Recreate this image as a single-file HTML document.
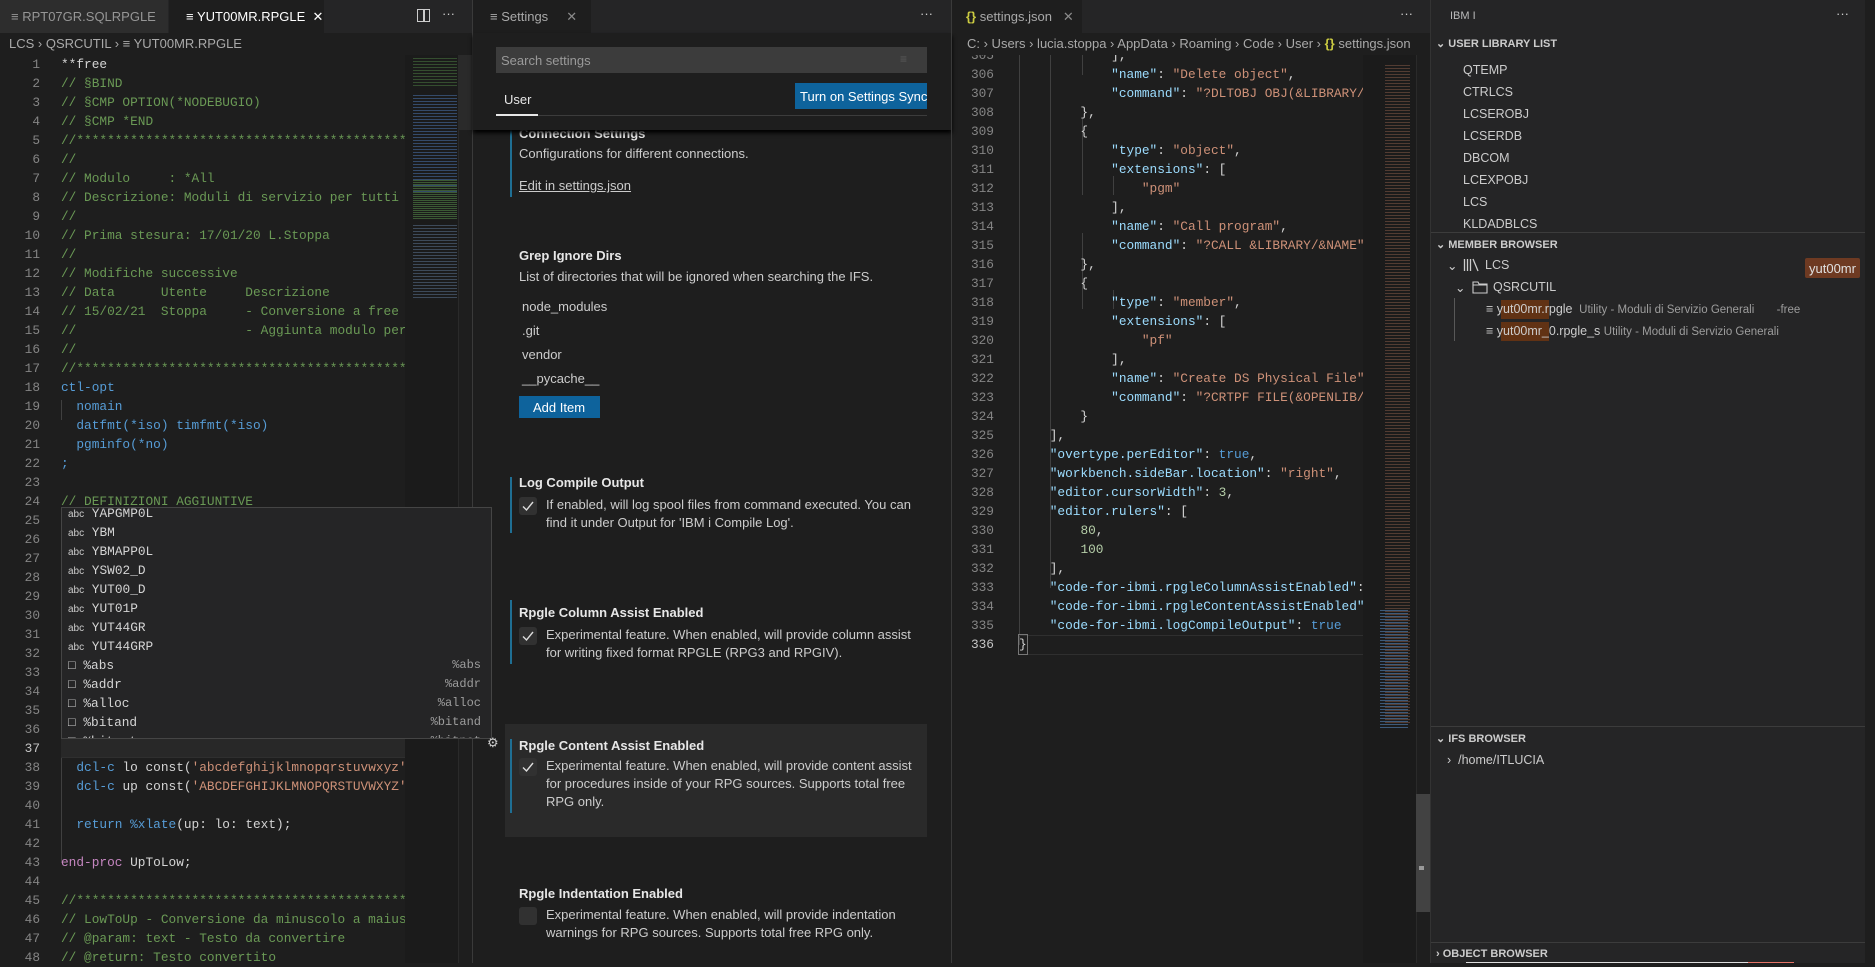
<!DOCTYPE html>
<html><head><meta charset="utf-8"><style>
*{margin:0;padding:0;box-sizing:border-box}
body{width:1875px;height:963px;background:#1e1e1e;position:relative;overflow:hidden;font-family:"Liberation Sans",sans-serif;color:#ccc}
.a{position:absolute}
.m{font-family:"Liberation Mono",monospace;font-size:12.8px;line-height:19px}
.ln{position:absolute;width:40px;text-align:right;color:#858585}
.cd{position:absolute;overflow:hidden;white-space:pre}
.r{white-space:pre;height:19px}
.c{color:#6a9955}.k{color:#569cd6}.s{color:#ce9178}.p{color:#c586c0}.w{color:#d4d4d4}.j{color:#9cdcfe}.n{color:#b5cea8}
.t{font-size:13px;white-space:nowrap}
.b{font-weight:bold;color:#e7e7e7}
.chk{position:absolute;width:18px;height:18px;background:#313131;border-radius:3px}
.chk svg{position:absolute;left:2px;top:2px}
.sh{font-size:11px;font-weight:bold;color:#ccc}
.abc{font-family:'Liberation Sans';font-size:10px;color:#ccc}
</style></head><body>

<!-- ===== Editor 1 ===== -->
<div class="a" style="left:0;top:0;width:472px;height:33px;background:#252526"></div>
<div class="a" style="left:0;top:0;width:168px;height:33px;background:#2d2d2d"></div>
<div class="a t" style="left:11px;top:9px;color:#969696">≡ RPT07GR.SQLRPGLE</div>
<div class="a" style="left:169px;top:0;width:155px;height:33px;background:#1e1e1e"></div>
<div class="a t" style="left:186px;top:9px;color:#fff">≡ YUT00MR.RPGLE &nbsp;✕</div>
<div class="a" style="left:417px;top:9px;width:13px;height:13px;border:1.5px solid #ccc"></div>
<div class="a" style="left:423px;top:9px;width:1.5px;height:13px;background:#ccc"></div>
<div class="a t" style="left:442px;top:6px;color:#ccc">···</div>
<div class="a t" style="left:9px;top:36px;color:#a9a9a9">LCS › QSRCUTIL › ≡ YUT00MR.RPGLE</div>

<div class="a" style="left:61px;top:738px;width:344px;height:20px;background:#282828;border-top:1px solid #2f2f2f;border-bottom:1px solid #2f2f2f"></div>
<div class="a" style="left:61px;top:400px;width:1px;height:20px;background:#404040"></div>
<div class="a" style="left:61px;top:758px;width:1px;height:105px;background:#404040"></div>

<div class="a m" style="left:0;top:55px;width:405px">
<div class="ln" style="top:0">1</div><div class="cd" style="left:61px;top:0;width:344px"><span class="w">**free</span></div>
<div class="ln" style="top:19px">2</div><div class="cd c" style="left:61px;top:19px;width:344px">// §BIND</div>
<div class="ln" style="top:38px">3</div><div class="cd c" style="left:61px;top:38px;width:344px">// §CMP OPTION(*NODEBUGIO)</div>
<div class="ln" style="top:57px">4</div><div class="cd c" style="left:61px;top:57px;width:344px">// §CMP *END</div>
<div class="ln" style="top:76px">5</div><div class="cd c" style="left:61px;top:76px;width:344px">//**************************************************</div>
<div class="ln" style="top:95px">6</div><div class="cd c" style="left:61px;top:95px;width:344px">//</div>
<div class="ln" style="top:114px">7</div><div class="cd c" style="left:61px;top:114px;width:344px">// Modulo     : *All</div>
<div class="ln" style="top:133px">8</div><div class="cd c" style="left:61px;top:133px;width:344px">// Descrizione: Moduli di servizio per tutti</div>
<div class="ln" style="top:152px">9</div><div class="cd c" style="left:61px;top:152px;width:344px">//</div>
<div class="ln" style="top:171px">10</div><div class="cd c" style="left:61px;top:171px;width:344px">// Prima stesura: 17/01/20 L.Stoppa</div>
<div class="ln" style="top:190px">11</div><div class="cd c" style="left:61px;top:190px;width:344px">//</div>
<div class="ln" style="top:209px">12</div><div class="cd c" style="left:61px;top:209px;width:344px">// Modifiche successive</div>
<div class="ln" style="top:228px">13</div><div class="cd c" style="left:61px;top:228px;width:344px">// Data      Utente     Descrizione</div>
<div class="ln" style="top:247px">14</div><div class="cd c" style="left:61px;top:247px;width:344px">// 15/02/21  Stoppa     - Conversione a free</div>
<div class="ln" style="top:266px">15</div><div class="cd c" style="left:61px;top:266px;width:344px">//                      - Aggiunta modulo per</div>
<div class="ln" style="top:285px">16</div><div class="cd c" style="left:61px;top:285px;width:344px">//</div>
<div class="ln" style="top:304px">17</div><div class="cd c" style="left:61px;top:304px;width:344px">//**************************************************</div>
<div class="ln" style="top:323px">18</div><div class="cd k" style="left:61px;top:323px;width:344px">ctl-opt</div>
<div class="ln" style="top:342px">19</div><div class="cd k" style="left:61px;top:342px;width:344px">  nomain</div>
<div class="ln" style="top:361px">20</div><div class="cd k" style="left:61px;top:361px;width:344px">  datfmt(*iso) timfmt(*iso)</div>
<div class="ln" style="top:380px">21</div><div class="cd k" style="left:61px;top:380px;width:344px">  pgminfo(*no)</div>
<div class="ln" style="top:399px">22</div><div class="cd k" style="left:61px;top:399px;width:344px">;</div>
<div class="ln" style="top:418px">23</div>
<div class="ln" style="top:437px">24</div><div class="cd c" style="left:61px;top:437px;width:344px">// DEFINIZIONI AGGIUNTIVE</div>
<div class="ln" style="top:456px">25</div><div class="ln" style="top:475px">26</div><div class="ln" style="top:494px">27</div><div class="ln" style="top:513px">28</div><div class="ln" style="top:532px">29</div><div class="ln" style="top:551px">30</div><div class="ln" style="top:570px">31</div><div class="ln" style="top:589px">32</div><div class="ln" style="top:608px">33</div><div class="ln" style="top:627px">34</div><div class="ln" style="top:646px">35</div><div class="ln" style="top:665px">36</div>
<div class="ln" style="top:684px;color:#c6c6c6">37</div>
<div class="ln" style="top:703px">38</div><div class="cd" style="left:61px;top:703px;width:344px">  <span class="k">dcl-c</span> <span class="w">lo const(</span><span class="s">'abcdefghijklmnopqrstuvwxyz'</span></div>
<div class="ln" style="top:722px">39</div><div class="cd" style="left:61px;top:722px;width:344px">  <span class="k">dcl-c</span> <span class="w">up const(</span><span class="s">'ABCDEFGHIJKLMNOPQRSTUVWXYZ'</span></div>
<div class="ln" style="top:741px">40</div>
<div class="ln" style="top:760px">41</div><div class="cd" style="left:61px;top:760px;width:344px">  <span class="k">return %xlate</span><span class="w">(up: lo: text);</span></div>
<div class="ln" style="top:779px">42</div>
<div class="ln" style="top:798px">43</div><div class="cd" style="left:61px;top:798px;width:344px"><span class="p">end-proc</span> <span class="w">UpToLow;</span></div>
<div class="ln" style="top:817px">44</div>
<div class="ln" style="top:836px">45</div><div class="cd c" style="left:61px;top:836px;width:344px">//**************************************************</div>
<div class="ln" style="top:855px">46</div><div class="cd c" style="left:61px;top:855px;width:344px">// LowToUp - Conversione da minuscolo a maiuscolo</div>
<div class="ln" style="top:874px">47</div><div class="cd c" style="left:61px;top:874px;width:344px">// @param: text - Testo da convertire</div>
<div class="ln" style="top:893px">48</div><div class="cd c" style="left:61px;top:893px;width:344px">// @return: Testo convertito</div>
</div>

<!-- minimap 1 -->
<div class="a" style="left:405px;top:55px;width:53px;height:908px;background:#1b1b1b"></div>
<div class="a" style="left:413px;top:58px;width:44px;height:30px;background:repeating-linear-gradient(#3b5a34 0 1px,transparent 1px 3px);opacity:.8"></div>
<div class="a" style="left:413px;top:95px;width:44px;height:100px;background:repeating-linear-gradient(#344a6a 0 1px,transparent 1px 3px)"></div>
<div class="a" style="left:413px;top:180px;width:44px;height:40px;background:repeating-linear-gradient(#3b5a34 0 1px,transparent 1px 2px)"></div>
<div class="a" style="left:413px;top:225px;width:44px;height:75px;background:repeating-linear-gradient(#3d4a5a 0 1px,transparent 1px 3px)"></div>
<div class="a" style="left:458px;top:55px;width:14px;height:908px;background:#1e1e1e;border-left:1px solid #2a2a2a"></div>
<div class="a" style="left:459px;top:55px;width:13px;height:75px;background:#2a2a2a"></div>
<div class="a" style="left:472px;top:0;width:1px;height:963px;background:#3a3a3a"></div>

<!-- suggest widget -->
<div class="a" style="left:61px;top:507px;width:431px;height:232px;background:#252526;border:1px solid #454545;overflow:hidden">
<div class="m" style="position:absolute;left:6px;top:-4px;color:#d4d4d4">
<div class="r"><span class="abc">abc</span> YAPGMP0L</div>
<div class="r"><span class="abc">abc</span> YBM</div>
<div class="r"><span class="abc">abc</span> YBMAPP0L</div>
<div class="r"><span class="abc">abc</span> YSW02_D</div>
<div class="r"><span class="abc">abc</span> YUT00_D</div>
<div class="r"><span class="abc">abc</span> YUT01P</div>
<div class="r"><span class="abc">abc</span> YUT44GR</div>
<div class="r"><span class="abc">abc</span> YUT44GRP</div>
<div class="r">□ %abs</div><div class="r">□ %addr</div><div class="r">□ %alloc</div><div class="r">□ %bitand</div><div class="r">□ %bitnot</div>
</div>
<div class="m" style="position:absolute;right:10px;top:148px;text-align:right;color:#9d9d9d;font-size:12px">
<div class="r">%abs</div><div class="r">%addr</div><div class="r">%alloc</div><div class="r">%bitand</div><div class="r">%bitnot</div></div>
</div>
<div class="a" style="left:487px;top:735px;font-size:13px;color:#ccc">⚙</div>

<!-- ===== Settings ===== -->
<div class="a" style="left:473px;top:0;width:479px;height:33px;background:#252526"></div>
<div class="a" style="left:473px;top:0;width:118px;height:33px;background:#1e1e1e"></div>
<div class="a t" style="left:490px;top:9px;color:#a9a9a9">≡ Settings &nbsp;&nbsp;&nbsp;&nbsp;<span style="color:#8a8a8a">✕</span></div>
<div class="a t" style="left:920px;top:6px;color:#ccc">···</div>

<div class="a" style="left:473px;top:130px;width:479px;height:833px;overflow:hidden">
<div class="a" style="left:37px;top:0;width:2px;height:67px;background:#1f6f94"></div>
<div class="a t b" style="left:46px;top:-4px">Connection Settings</div>
<div class="a t" style="left:46px;top:16px">Configurations for different connections.</div>
<div class="a t" style="left:46px;top:48px;text-decoration:underline;color:#ccc">Edit in settings.json</div>
<div class="a t b" style="left:46px;top:118px">Grep Ignore Dirs</div>
<div class="a t" style="left:46px;top:139px">List of directories that will be ignored when searching the IFS.</div>
<div class="a t" style="left:49px;top:169px">node_modules</div>
<div class="a t" style="left:49px;top:193px">.git</div>
<div class="a t" style="left:49px;top:217px">vendor</div>
<div class="a t" style="left:49px;top:241px">__pycache__</div>
<div class="a" style="left:46px;top:266px;width:81px;height:22px;background:#0e639c"></div>
<div class="a t" style="left:60px;top:270px;color:#fff">Add Item</div>

<div class="a" style="left:37px;top:347px;width:2px;height:56px;background:#1f6f94"></div>
<div class="a t b" style="left:46px;top:345px">Log Compile Output</div>
<div class="chk" style="left:46px;top:367px"><svg width="14" height="14"><path d="M2 7.5 L5.5 11 L12 3" stroke="#ddd" stroke-width="1.4" fill="none"/></svg></div>
<div class="a t" style="left:73px;top:366px;line-height:18px">If enabled, will log spool files from command executed. You can<br>find it under Output for 'IBM i Compile Log'.</div>

<div class="a" style="left:37px;top:470px;width:2px;height:64px;background:#1f6f94"></div>
<div class="a t b" style="left:46px;top:475px">Rpgle Column Assist Enabled</div>
<div class="chk" style="left:46px;top:497px"><svg width="14" height="14"><path d="M2 7.5 L5.5 11 L12 3" stroke="#ddd" stroke-width="1.4" fill="none"/></svg></div>
<div class="a t" style="left:73px;top:496px;line-height:18px">Experimental feature. When enabled, will provide column assist<br>for writing fixed format RPGLE (RPG3 and RPGIV).</div>

<div class="a" style="left:32px;top:594px;width:422px;height:113px;background:#2a2a2a"></div>
<div class="a" style="left:37px;top:609px;width:2px;height:74px;background:#1f6f94"></div>
<div class="a t b" style="left:46px;top:608px">Rpgle Content Assist Enabled</div>
<div class="chk" style="left:46px;top:628px"><svg width="14" height="14"><path d="M2 7.5 L5.5 11 L12 3" stroke="#ddd" stroke-width="1.4" fill="none"/></svg></div>
<div class="a t" style="left:73px;top:627px;line-height:18px">Experimental feature. When enabled, will provide content assist<br>for procedures inside of your RPG sources. Supports total free<br>RPG only.</div>

<div class="a t b" style="left:46px;top:756px">Rpgle Indentation Enabled</div>
<div class="chk" style="left:46px;top:777px"></div>
<div class="a t" style="left:73px;top:776px;line-height:18px">Experimental feature. When enabled, will provide indentation<br>warnings for RPG sources. Supports total free RPG only.</div>
</div>

<div class="a" style="left:473px;top:33px;width:479px;height:97px;background:#1e1e1e;box-shadow:0 3px 4px #000"></div>
<div class="a" style="left:496px;top:47px;width:431px;height:26px;background:#3c3c3c"></div>
<div class="a t" style="left:501px;top:53px;color:#9a9a9a">Search settings</div>
<div class="a t" style="left:900px;top:52px;color:#5a5a5a;font-size:12px">≡</div>
<div class="a t" style="left:504px;top:92px;color:#e7e7e7">User</div>
<div class="a" style="left:496px;top:115px;width:431px;height:1px;background:#3c3c3c"></div>
<div class="a" style="left:496px;top:114px;width:42px;height:2px;background:#e7e7e7"></div>
<div class="a" style="left:795px;top:83px;width:132px;height:26px;background:#0e639c"></div>
<div class="a t" style="left:800px;top:89px;color:#fff">Turn on Settings Sync</div>
<div class="a" style="left:951px;top:0;width:1px;height:963px;background:#3a3a3a"></div>

<!-- ===== JSON editor ===== -->
<div class="a" style="left:952px;top:0;width:478px;height:33px;background:#252526"></div>
<div class="a" style="left:952px;top:0;width:130px;height:33px;background:#1e1e1e"></div>
<div class="a t" style="left:966px;top:9px;color:#a9a9a9"><span style="color:#cbcb41;font-weight:bold">{}</span> settings.json &nbsp;&nbsp;<span style="color:#8a8a8a">✕</span></div>
<div class="a t" style="left:1400px;top:6px;color:#ccc">···</div>
<div class="a t" style="left:967px;top:36px;color:#a9a9a9">C: › Users › lucia.stoppa › AppData › Roaming › Code › User › <span style="color:#cbcb41;font-weight:bold">{}</span> settings.json</div>

<div class="a" style="left:952px;top:55px;width:411px;height:908px;overflow:hidden">
<div class="a" style="left:67px;top:0;width:1px;height:590px;background:#404040"></div>
<div class="a" style="left:98px;top:0;width:1px;height:533px;background:#404040"></div>
<div class="a" style="left:130px;top:0;width:1px;height:20px;background:#404040"></div>
<div class="a" style="left:130px;top:64px;width:1px;height:76px;background:#404040"></div>
<div class="a" style="left:130px;top:178px;width:1px;height:76px;background:#404040"></div>
<div class="a" style="left:161px;top:121px;width:1px;height:19px;background:#404040"></div>
<div class="a" style="left:161px;top:235px;width:1px;height:19px;background:#404040"></div>
<div class="a" style="left:98px;top:387px;width:1px;height:38px;background:#404040"></div>
<div class="a" style="left:67px;top:580px;width:344px;height:20px;border-top:1px solid #2f2f2f;border-bottom:1px solid #2f2f2f"></div>
<div class="a m" style="left:0;top:-9px;width:411px">
<div class="ln" style="top:0;left:2px">305</div><div class="cd w" style="left:67px;top:0">            ],</div>
<div class="ln" style="top:19px;left:2px">306</div><div class="cd" style="left:67px;top:19px">            <span class="j">"name"</span><span class="w">: </span><span class="s">"Delete object"</span><span class="w">,</span></div>
<div class="ln" style="top:38px;left:2px">307</div><div class="cd" style="left:67px;top:38px">            <span class="j">"command"</span><span class="w">: </span><span class="s">"?DLTOBJ OBJ(&amp;LIBRARY/&amp;NAME)"</span></div>
<div class="ln" style="top:57px;left:2px">308</div><div class="cd w" style="left:67px;top:57px">        },</div>
<div class="ln" style="top:76px;left:2px">309</div><div class="cd w" style="left:67px;top:76px">        {</div>
<div class="ln" style="top:95px;left:2px">310</div><div class="cd" style="left:67px;top:95px">            <span class="j">"type"</span><span class="w">: </span><span class="s">"object"</span><span class="w">,</span></div>
<div class="ln" style="top:114px;left:2px">311</div><div class="cd" style="left:67px;top:114px">            <span class="j">"extensions"</span><span class="w">: [</span></div>
<div class="ln" style="top:133px;left:2px">312</div><div class="cd s" style="left:67px;top:133px">                "pgm"</div>
<div class="ln" style="top:152px;left:2px">313</div><div class="cd w" style="left:67px;top:152px">            ],</div>
<div class="ln" style="top:171px;left:2px">314</div><div class="cd" style="left:67px;top:171px">            <span class="j">"name"</span><span class="w">: </span><span class="s">"Call program"</span><span class="w">,</span></div>
<div class="ln" style="top:190px;left:2px">315</div><div class="cd" style="left:67px;top:190px">            <span class="j">"command"</span><span class="w">: </span><span class="s">"?CALL &amp;LIBRARY/&amp;NAME"</span></div>
<div class="ln" style="top:209px;left:2px">316</div><div class="cd w" style="left:67px;top:209px">        },</div>
<div class="ln" style="top:228px;left:2px">317</div><div class="cd w" style="left:67px;top:228px">        {</div>
<div class="ln" style="top:247px;left:2px">318</div><div class="cd" style="left:67px;top:247px">            <span class="j">"type"</span><span class="w">: </span><span class="s">"member"</span><span class="w">,</span></div>
<div class="ln" style="top:266px;left:2px">319</div><div class="cd" style="left:67px;top:266px">            <span class="j">"extensions"</span><span class="w">: [</span></div>
<div class="ln" style="top:285px;left:2px">320</div><div class="cd s" style="left:67px;top:285px">                "pf"</div>
<div class="ln" style="top:304px;left:2px">321</div><div class="cd w" style="left:67px;top:304px">            ],</div>
<div class="ln" style="top:323px;left:2px">322</div><div class="cd" style="left:67px;top:323px">            <span class="j">"name"</span><span class="w">: </span><span class="s">"Create DS Physical File"</span></div>
<div class="ln" style="top:342px;left:2px">323</div><div class="cd" style="left:67px;top:342px">            <span class="j">"command"</span><span class="w">: </span><span class="s">"?CRTPF FILE(&amp;OPENLIB/&amp;NAME)"</span></div>
<div class="ln" style="top:361px;left:2px">324</div><div class="cd w" style="left:67px;top:361px">        }</div>
<div class="ln" style="top:380px;left:2px">325</div><div class="cd w" style="left:67px;top:380px">    ],</div>
<div class="ln" style="top:399px;left:2px">326</div><div class="cd" style="left:67px;top:399px">    <span class="j">"overtype.perEditor"</span><span class="w">: </span><span class="k">true</span><span class="w">,</span></div>
<div class="ln" style="top:418px;left:2px">327</div><div class="cd" style="left:67px;top:418px">    <span class="j">"workbench.sideBar.location"</span><span class="w">: </span><span class="s">"right"</span><span class="w">,</span></div>
<div class="ln" style="top:437px;left:2px">328</div><div class="cd" style="left:67px;top:437px">    <span class="j">"editor.cursorWidth"</span><span class="w">: </span><span class="n">3</span><span class="w">,</span></div>
<div class="ln" style="top:456px;left:2px">329</div><div class="cd" style="left:67px;top:456px">    <span class="j">"editor.rulers"</span><span class="w">: [</span></div>
<div class="ln" style="top:475px;left:2px">330</div><div class="cd" style="left:67px;top:475px">        <span class="n">80</span><span class="w">,</span></div>
<div class="ln" style="top:494px;left:2px">331</div><div class="cd" style="left:67px;top:494px">        <span class="n">100</span></div>
<div class="ln" style="top:513px;left:2px">332</div><div class="cd w" style="left:67px;top:513px">    ],</div>
<div class="ln" style="top:532px;left:2px">333</div><div class="cd" style="left:67px;top:532px">    <span class="j">"code-for-ibmi.rpgleColumnAssistEnabled"</span><span class="w">: true,</span></div>
<div class="ln" style="top:551px;left:2px">334</div><div class="cd" style="left:67px;top:551px">    <span class="j">"code-for-ibmi.rpgleContentAssistEnabled"</span><span class="w">: true,</span></div>
<div class="ln" style="top:570px;left:2px">335</div><div class="cd" style="left:67px;top:570px">    <span class="j">"code-for-ibmi.logCompileOutput"</span><span class="w">: </span><span class="k">true</span></div>
<div class="ln" style="top:589px;left:2px;color:#c6c6c6">336</div><div class="cd w" style="left:67px;top:589px;outline:1px solid #777">}</div>
</div>
</div>
<!-- json minimap -->
<div class="a" style="left:1363px;top:55px;width:53px;height:908px;background:#1b1b1b"></div>
<div class="a" style="left:1385px;top:65px;width:25px;height:660px;background:repeating-linear-gradient(#6b4a3c 0 1px,transparent 1px 3px);opacity:.7"></div>
<div class="a" style="left:1380px;top:610px;width:28px;height:120px;background:repeating-linear-gradient(#3d5a7a 0 1px,transparent 1px 3px)"></div>
<div class="a" style="left:1416px;top:55px;width:14px;height:908px;background:#1e1e1e;border-left:1px solid #2a2a2a"></div>
<div class="a" style="left:1416px;top:794px;width:14px;height:118px;background:#424242"></div>
<div class="a" style="left:1419px;top:866px;width:5px;height:4px;background:#999"></div>
<div class="a" style="left:1430px;top:0;width:1px;height:963px;background:#333"></div>

<!-- ===== Sidebar ===== -->
<div class="a" style="left:1431px;top:0;width:434px;height:963px;background:#252526"></div>
<div class="a" style="left:1865px;top:0;width:10px;height:963px;background:#1e1e1e"></div>
<div class="a" style="left:1450px;top:10px;font-size:11px;color:#bbb">IBM I</div>
<div class="a t" style="left:1836px;top:6px;color:#ccc">···</div>
<div class="a sh" style="left:1436px;top:37px">⌄ USER LIBRARY LIST</div>
<div class="a t" style="left:1463px;top:59px;line-height:22px;font-size:12.5px">QTEMP<br>CTRLCS<br>LCSEROBJ<br>LCSERDB<br>DBCOM<br>LCEXPOBJ<br>LCS<br>KLDADBLCS</div>
<div class="a" style="left:1431px;top:232px;width:434px;height:1px;background:#3c3c3c"></div>
<div class="a sh" style="left:1436px;top:238px">⌄ MEMBER BROWSER</div>
<div class="a t" style="left:1447px;top:258px;font-size:12.5px">⌄</div>
<svg class="a" style="left:1463px;top:258px" width="17" height="14"><path d="M1.5 1v12M4.5 1v12M7.5 1v12M10 1l5 12" stroke="#ccc" stroke-width="1.3" fill="none"/></svg>
<div class="a t" style="left:1485px;top:258px;font-size:12.5px">LCS</div>
<div class="a" style="left:1805px;top:258px;width:55px;height:20px;background:#6e3a22;border-radius:2px"></div>
<div class="a t" style="left:1809px;top:261px;color:#e0e0e0">yut00mr</div>
<div class="a t" style="left:1455px;top:280px;font-size:12.5px">⌄</div>
<svg class="a" style="left:1472px;top:281px" width="16" height="13"><path d="M1 1h5l1 2h8v9H1z M1 4h14" stroke="#ccc" stroke-width="1.1" fill="none"/></svg>
<div class="a t" style="left:1493px;top:280px;font-size:12.5px">QSRCUTIL</div>
<div class="a" style="left:1454px;top:298px;width:1px;height:43px;background:#585858"></div>
<div class="a" style="left:1501px;top:300px;width:48px;height:19px;background:#613214"></div>
<div class="a" style="left:1501px;top:322px;width:48px;height:19px;background:#613214"></div>
<div class="a t" style="left:1486px;top:302px;font-size:12.5px">≡ yut00mr.rpgle <span style="color:#9d9d9d;font-size:11.5px">&nbsp;Utility - Moduli di Servizio Generali &nbsp;&nbsp;&nbsp;&nbsp;&nbsp;&nbsp;-free</span></div>
<div class="a t" style="left:1486px;top:324px;font-size:12.5px">≡ yut00mr_0.rpgle_s <span style="color:#9d9d9d;font-size:11.5px">Utility - Moduli di Servizio Generali</span></div>
<div class="a" style="left:1431px;top:726px;width:434px;height:1px;background:#3c3c3c"></div>
<div class="a sh" style="left:1436px;top:732px">⌄ IFS BROWSER</div>
<div class="a t" style="left:1447px;top:753px;font-size:12.5px">› &nbsp;/home/ITLUCIA</div>
<div class="a" style="left:1431px;top:942px;width:434px;height:1px;background:#3c3c3c"></div>
<div class="a sh" style="left:1436px;top:948px">› OBJECT BROWSER</div>
<div class="a" style="left:1466px;top:962px;width:282px;height:1px;background:#ddd"></div>
<div class="a" style="left:1748px;top:962px;width:46px;height:1px;background:#e57366"></div>
</body></html>
